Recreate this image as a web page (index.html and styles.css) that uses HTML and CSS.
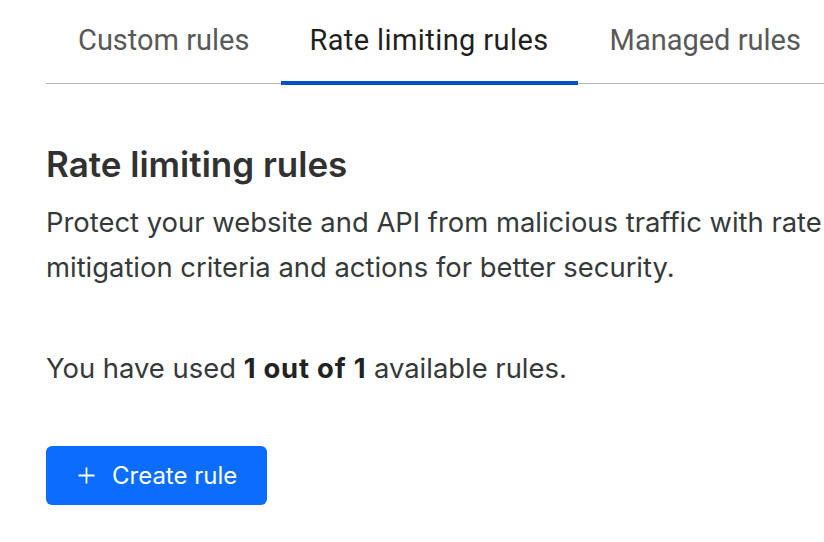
FILE: index.html
```html
<!DOCTYPE html>
<html lang="en">
<head>
<meta charset="utf-8">
<title>Rate limiting rules</title>
<link rel="stylesheet" href="styles.css">
</head>
<body>
<div class="page">
  <nav class="tabs">
    <a class="tab">Custom rules</a>
    <a class="tab active">Rate limiting rules</a>
    <a class="tab">Managed rules</a>
  </nav>
  <section class="content">
    <h1 class="title">Rate limiting rules</h1>
    <p class="desc">Protect your website and API from malicious traffic with rate limiting rules. Set mitigation criteria and actions for better security.</p>
    <p class="usage">You have used <strong>1 out of 1</strong> available rules.</p>
    <button class="btn">
      <svg class="plus" width="17" height="17" viewBox="0 0 17 17" aria-hidden="true"><path d="M8.5 0.5v16M0.5 8.5h16" stroke="#fff" stroke-width="1.8" fill="none"/></svg>
      <span>Create rule</span>
    </button>
  </section>
</div>
</body>
</html>
```
FILE: styles.css
```css
html, body {
  margin: 0;
  padding: 0;
  background: #fff;
  overflow: hidden;
}
body {
  font-family: Inter, "Noto Sans", sans-serif;
  color: #313131;
}
.page {
  padding-left: 46px;
  overflow: hidden;
}
.tabs {
  display: flex;
  border-bottom: 1px solid #b6b6b6;
  margin-top: 0;
}
.tab {
  font-family: Roboto, "Liberation Sans", sans-serif;
  font-size: 29px;
  line-height: 36px;
  color: #595959;
  padding: 22px 32px 23px 32px;
  border-bottom: 4px solid transparent;
  margin-bottom: -2px;
  white-space: nowrap;
}
.tab.active {
  color: #1f1f1f;
  letter-spacing: 0.4px;
  border-bottom-color: #0051c3;
  padding-left: 28px;
  padding-right: 29px;
}
.content {
  padding-top: 60px;
}
.title {
  margin: 0;
  font-size: 35px;
  line-height: 40px;
  font-weight: 600;
  color: #313131;
}
.desc {
  margin: 16px 0 0;
  font-size: 27.4px;
  line-height: 45px;
  color: #36393a;
  width: 1100px;
}
.usage {
  margin: 57px 0 0;
  font-size: 27.4px;
  line-height: 43px;
  color: #36393a;
}
.usage strong {
  font-weight: 700;
  letter-spacing: 0.8px;
  color: #222;
}
.btn {
  margin-top: 56px;
  display: flex;
  align-items: center;
  gap: 17px;
  height: 59px;
  padding: 0 30px 0 32px;
  border: none;
  border-radius: 6px;
  background: #0b6dff;
  color: #fff;
  font-family: Inter, "Noto Sans", sans-serif;
  font-size: 24px;
  cursor: pointer;
}
.plus {
  display: block;
}
```
